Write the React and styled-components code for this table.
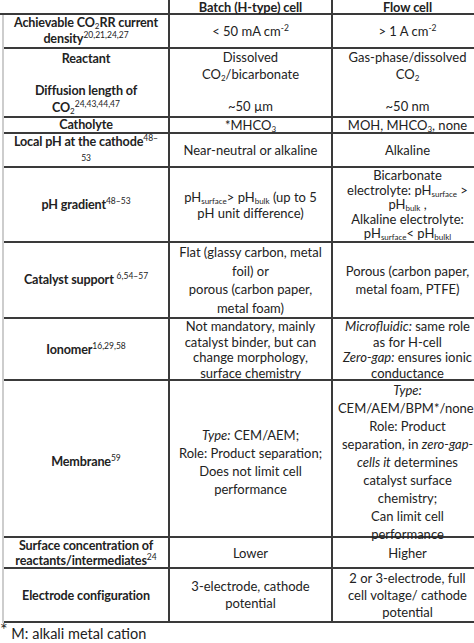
import React from 'react';
import styled, { createGlobalStyle } from 'styled-components';

const Global = createGlobalStyle`
  html, body {
    margin: 0;
    padding: 0;
    background: #ffffff;
  }
  body {
    width: 474px;
    height: 643px;
    overflow: hidden;
    font-family: Lato, 'Open Sans', sans-serif;
    color: #222;
  }
`;

const rows = [
  {
    h: 34,
    lh: 16,
    label: (
      <>
        Achievable CO<Sub>2</Sub>RR current
        <br />
        density<Sup>20,21,24,27</Sup>
      </>
    ),
    batch: (
      <>
        &lt; 50 mA cm<Sup>-2</Sup>
      </>
    ),
    flow: (
      <>
        &gt; 1 A cm<Sup>-2</Sup>
      </>
    )
  },
  {
    h: 33,
    lh: 17,
    noLine: true,
    labelAlign: 'start',
    label: <>Reactant</>,
    batch: (
      <>
        Dissolved
        <br />
        CO<Sub>2</Sub>/bicarbonate
      </>
    ),
    flow: (
      <>
        Gas-phase/dissolved
        <br />
        CO<Sub>2</Sub>
      </>
    )
  },
  {
    h: 36,
    lh: 17,
    align: 'end',
    label: (
      <>
        Diffusion length of
        <br />
        CO<Sub>2</Sub>
        <Sup>24,43,44,47</Sup>
      </>
    ),
    batch: <>~50 µm</>,
    flow: <>~50 nm</>
  },
  {
    h: 16,
    lh: 14,
    label: <>Catholyte</>,
    batch: (
      <>
        *MHCO<Sub>3</Sub>
      </>
    ),
    flow: (
      <>
        MOH, MHCO<Sub>3</Sub>, none
      </>
    )
  },
  {
    h: 34,
    lh: 15,
    label: (
      <>
        Local pH at the cathode<Sup>48–</Sup>
        <br />
        <Tiny>53</Tiny>
      </>
    ),
    batch: <>Near-neutral or alkaline</>,
    flow: <>Alkaline</>
  },
  {
    h: 75,
    lh: 16,
    flowLh: 14.5,
    label: (
      <>
        pH gradient<Sup>48–53</Sup>
      </>
    ),
    batch: (
      <>
        pH<Sub>surface</Sub>&gt; pH<Sub>bulk</Sub> (up to 5
        <br />
        pH unit difference)
      </>
    ),
    flow: (
      <>
        Bicarbonate
        <br />
        electrolyte: pH<Sub>surface</Sub> &gt;
        <br />
        pH<Sub>bulk</Sub> ,
        <br />
        Alkaline electrolyte:
        <br />
        pH<Sub>surface</Sub>&lt; pH<Sub>bulkl</Sub>
      </>
    )
  },
  {
    h: 76,
    lh: 18.5,
    label: (
      <>
        Catalyst support <Sup>6,54–57</Sup>
      </>
    ),
    batch: (
      <>
        Flat (glassy carbon, metal
        <br />
        foil) or
        <br />
        porous (carbon paper,
        <br />
        metal foam)
      </>
    ),
    flow: (
      <>
        Porous (carbon paper,
        <br />
        metal foam, PTFE)
      </>
    )
  },
  {
    h: 62,
    lh: 15.5,
    label: (
      <>
        Ionomer<Sup>16,29,58</Sup>
      </>
    ),
    batch: (
      <>
        Not mandatory, mainly
        <br />
        catalyst binder, but can
        <br />
        change morphology,
        <br />
        surface chemistry
      </>
    ),
    flow: (
      <>
        <i>Microfluidic:</i> same role
        <br />
        as for H-cell
        <br />
        <i>Zero-gap:</i> ensures ionic
        <br />
        conductance
      </>
    )
  },
  {
    h: 157,
    lh: 18,
    label: (
      <>
        Membrane<Sup>59</Sup>
      </>
    ),
    batch: (
      <>
        <i>Type:</i> CEM/AEM;
        <br />
        Role: Product separation;
        <br />
        Does not limit cell
        <br />
        performance
      </>
    ),
    flow: (
      <>
        <i>Type:</i>
        <br />
        CEM/AEM/BPM*/none;
        <br />
        Role: Product
        <br />
        separation, in <i>zero-gap-</i>
        <br />
        <i>cells it</i> determines
        <br />
        catalyst surface
        <br />
        chemistry;
        <br />
        Can limit cell
        <br />
        performance
      </>
    )
  },
  {
    h: 31,
    lh: 15,
    label: (
      <>
        Surface concentration of
        <br />
        reactants/intermediates<Sup>24</Sup>
      </>
    ),
    batch: <>Lower</>,
    flow: <>Higher</>
  },
  {
    h: 54,
    lh: 17,
    label: <>Electrode configuration</>,
    batch: (
      <>
        3-electrode, cathode
        <br />
        potential
      </>
    ),
    flow: (
      <>
        2 or 3-electrode, full
        <br />
        cell voltage/ cathode
        <br />
        potential
      </>
    )
  }
];

function Sub({ children }) {
  return <S.Sub>{children}</S.Sub>;
}

function Sup({ children }) {
  return <S.Sup>{children}</S.Sup>;
}

function Tiny({ children }) {
  return <S.Tiny>{children}</S.Tiny>;
}

const App = () => {
  return (
    <>
      <Global />
      <S.Page>
        <S.Table>
          <S.HeadRow>
            <S.HeadCell />
            <S.HeadCell $divider>Batch (H-type) cell</S.HeadCell>
            <S.HeadCell $divider>Flow cell</S.HeadCell>
          </S.HeadRow>
          <S.Body>
            {rows.map((r, i) => (
              <S.Row key={i} $h={r.h} $noLine={r.noLine}>
                <S.Cell $bold $align={r.labelAlign || 'center'} $lh={r.lh}>
                  <S.Text>{r.label}</S.Text>
                </S.Cell>
                <S.Cell $divider $align={r.align || 'center'} $lh={r.lh}>
                  <S.Text>{r.batch}</S.Text>
                </S.Cell>
                <S.Cell $divider $align={r.align || 'center'} $lh={r.flowLh || r.lh}>
                  <S.Text>{r.flow}</S.Text>
                </S.Cell>
              </S.Row>
            ))}
          </S.Body>
        </S.Table>
        <S.Footnote>
          <S.Star>*</S.Star> M: alkali metal cation
        </S.Footnote>
      </S.Page>
    </>
  );
};

const S = {
  Page: styled.div`
    width: 474px;
    height: 643px;
    overflow: hidden;
    display: flex;
    flex-direction: column;
  `,
  Table: styled.div`
    width: 482px;
    display: flex;
    flex-direction: column;
  `,
  HeadRow: styled.div`
    display: grid;
    grid-template-columns: 168px 163px 151px;
    height: 15px;
    box-sizing: border-box;
    border-bottom: 2px solid #3a3a3a;
  `,
  HeadCell: styled.div`
    display: flex;
    align-items: center;
    justify-content: center;
    white-space: nowrap;
    font-size: 12.8px;
    letter-spacing: -0.1px;
    line-height: 12px;
    font-weight: 700;
    border-left: ${(p) => (p.$divider ? '2px solid #3a3a3a' : '0')};
  `,
  Body: styled.div`
    display: flex;
    flex-direction: column;
    border-left: 2px solid #cdcdcd;
    margin-left: 2px;
    width: 478px;
  `,
  Row: styled.div`
    display: grid;
    grid-template-columns: 164px 163px 151px;
    height: ${(p) => p.$h}px;
    box-sizing: border-box;
    border-bottom: ${(p) => (p.$noLine ? '0' : '2px solid #3a3a3a')};
  `,
  Cell: styled.div`
    display: flex;
    flex-direction: column;
    justify-content: ${(p) =>
      p.$align === 'start' ? 'flex-start' : p.$align === 'end' ? 'flex-end' : 'center'};
    align-items: center;
    text-align: center;
    white-space: nowrap;
    font-size: ${(p) => (p.$bold ? '12.6px' : '13px')};
    letter-spacing: ${(p) => (p.$bold ? '-0.15px' : '0')};
    line-height: ${(p) => p.$lh}px;
    font-weight: ${(p) => (p.$bold ? 700 : 400)};
    border-left: ${(p) => (p.$divider ? '2px solid #3a3a3a' : '0')};
    padding: ${(p) => (p.$align === 'start' ? '1px 0 0' : p.$align === 'end' ? '0 0 1px' : '0')};
  `,
  Text: styled.div`
    display: block;
  `,
  Sub: styled.sub`
    font-size: 8px;
    line-height: 0;
    vertical-align: -2px;
    font-weight: 400;
    letter-spacing: 0;
  `,
  Sup: styled.sup`
    font-size: 8.5px;
    line-height: 0;
    vertical-align: 5px;
    font-weight: 400;
    letter-spacing: 0;
  `,
  Tiny: styled.span`
    font-size: 8.5px;
    font-weight: 400;
  `,
  Footnote: styled.div`
    font-size: 14.5px;
    line-height: 18px;
    padding-top: 2px;
    color: #222;
  `,
  Star: styled.span`
    font-size: 18px;
    vertical-align: 3px;
    line-height: 0;
  `
};

export default App;
